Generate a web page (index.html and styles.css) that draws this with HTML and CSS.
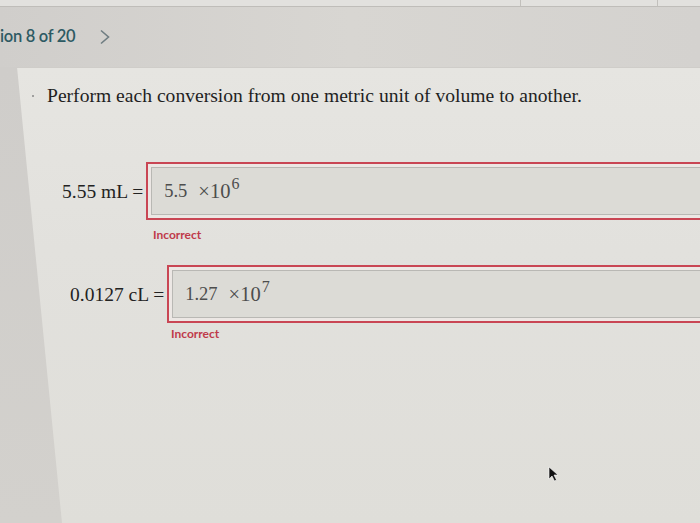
FILE: index.html
```html
<!DOCTYPE html>
<html>
<head>
<meta charset="utf-8">
<link rel="stylesheet" href="styles.css">
</head>
<body>
<div class="screen">
  <div class="topstrip">
    <div class="tab t1"></div>
    <div class="tab t2"></div>
    <div class="tab t3"></div>
  </div>
  <div class="header">
    <span class="qnum">ion 8 of 20</span>
    <svg class="chev" width="12" height="16" viewBox="0 0 12 16"><path d="M2 1.5 L9.5 8 L2 14.5" fill="none" stroke="#6f7d82" stroke-width="1.6"/></svg>
  </div>
  <div class="body">
    <div class="card">
      <div class="prompt"><span class="dot"></span>Perform each conversion from one metric unit of volume to another.</div>
      <div class="item i1">
        <div class="row">
          <span class="label">5.55 mL =</span>
          <div class="field">
            <div class="inner"><span class="val">5.5</span><span class="exp">×10<sup>6</sup></span></div>
          </div>
        </div>
        <div class="status">Incorrect</div>
      </div>
      <div class="item i2">
        <div class="row">
          <span class="label">0.0127 cL =</span>
          <div class="field">
            <div class="inner"><span class="val">1.27</span><span class="exp">×10<sup>7</sup></span></div>
          </div>
        </div>
        <div class="status">Incorrect</div>
      </div>
    </div>
  </div>
  <svg class="cursor" width="12" height="16" viewBox="0 0 12 16"><path d="M1 1 L1 13 L4 10 L6.5 15 L8.5 14 L6 9 L10 9 Z" fill="#111" stroke="#fff" stroke-width="0.6"/></svg>
</div>
</body>
</html>
```
FILE: styles.css
```css
html, body {
  margin: 0;
  padding: 0;
}
body {
  width: 700px;
  height: 523px;
  overflow: hidden;
  background: #d2d0cc;
}
.screen {
  position: relative;
  width: 700px;
  height: 523px;
  display: flex;
  flex-direction: column;
  background: linear-gradient(180deg, #d6d4d0 0%, #d3d1cd 60%, #d8d6d1 100%);
}
.topstrip {
  height: 6px;
  display: flex;
  border-bottom: 1px solid #bfbdb9;
  background: #e2e1de;
}
.tab { height: 100%; border-right: 1px solid #c2c0bc; }
.t1 { width: 520px; }
.t2 { width: 136px; }
.t3 { flex: 1; border-right: none; }
.header {
  height: 60px;
  display: flex;
  align-items: center;
  gap: 24px;
  padding-bottom: 2px;
  box-sizing: border-box;
  background: linear-gradient(90deg, #d0cecb 0%, #d8d6d2 50%, #d4d2cf 100%);
}
.qnum {
  margin-left: 0;
  font-family: Lato, "Open Sans", sans-serif;
  font-weight: 600;
  font-size: 16.5px;
  color: #2d5a63;
  letter-spacing: -0.3px;
}
.chev { margin-top: 1px; }
.body {
  flex: 1;
  display: flex;
  background: linear-gradient(180deg, #cfcdca 0%, #d3d1cd 100%);
}
.card {
  margin-left: 17px;
  flex: 1;
  background: linear-gradient(180deg, #e6e5e1 0%, #e2e1dd 40%, #dfded9 100%);
  border-top: 1px solid #cfcdc9;
  padding-top: 17px;
  clip-path: polygon(0 0, 100% 0, 100% 100%, 45px 100%);
}
.prompt {
  position: relative;
  padding-left: 30px;
  font-family: "Liberation Serif", serif;
  font-size: 19.6px;
  color: #1f1f1f;
  line-height: 22px;
}
.dot {
  position: absolute;
  left: 15px;
  top: 10px;
  width: 2px;
  height: 2px;
  border-radius: 50%;
  background: #888;
}
.item { display: flex; flex-direction: column; }
.i1 { margin-top: 55px; padding-left: 45px; }
.i2 { margin-top: 23px; padding-left: 53px; }
.row {
  display: flex;
  align-items: center;
}
.label {
  font-family: "Liberation Serif", serif;
  font-size: 19.5px;
  color: #222;
  padding-right: 3px;
  padding-top: 2px;
  white-space: nowrap;
}
.field {
  flex: 1;
  height: 58px;
  border: 2px solid #c94654;
  border-right: none;
  box-sizing: border-box;
  padding: 3px 0 3px 3px;
  background: #ece7e4;
  margin-right: -20px;
}
.inner {
  height: 100%;
  box-sizing: border-box;
  border: 1px solid #b9b8b4;
  border-right: none;
  background: #dcdbd6;
  display: flex;
  align-items: center;
  padding: 0 0 0 12px;
  font-family: "Liberation Serif", serif;
  font-size: 18.5px;
  color: #4d4d4d;
}
.val { margin-right: 11px; }
.exp { font-size: 20.5px; }
.exp sup { font-size: 16px; vertical-align: 9px; line-height: 0; margin-left: 1px; }
.status {
  font-family: Lato, "Open Sans", sans-serif;
  font-weight: 700;
  font-size: 12px;
  color: #bf3a4a;
}
.i1 .status { margin-left: 91px; margin-top: 7px; }
.i2 .status { margin-left: 101px; margin-top: 3px; }
.cursor {
  position: absolute;
  left: 548px;
  top: 466px;
}
```
